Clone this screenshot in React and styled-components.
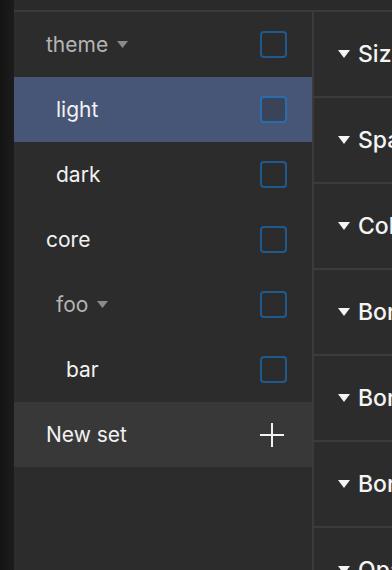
import React from "react";
import styled, { createGlobalStyle } from "styled-components";

const Global = createGlobalStyle`
  html, body { margin: 0; padding: 0; background: #2c2c2c; }
  body { font-family: Inter, "Noto Sans", "Liberation Sans", sans-serif; overflow: hidden; }
  * { box-sizing: border-box; }
`;

const Frame = styled.div`
  display: flex;
  width: 392px;
  height: 570px;
  overflow: hidden;
`;

const Gutter = styled.div`
  width: 14px;
  flex: none;
  background: linear-gradient(to right, #141414, #1c1c1c);
`;

const Main = styled.div`
  flex: 1;
  display: flex;
  flex-direction: column;
  min-width: 0;
`;

const TopStrip = styled.div`
  height: 12px;
  flex: none;
  background: #2a2a2a;
  border-bottom: 2px solid #3b3b3b;
`;

const Body = styled.div`
  flex: 1;
  display: flex;
  min-height: 0;
`;

const SetList = styled.div`
  width: 298px;
  flex: none;
  background: #2c2c2c;
  display: flex;
  flex-direction: column;
`;

const Row = styled.div`
  height: 65px;
  flex: none;
  display: flex;
  align-items: center;
  justify-content: space-between;
  padding-left: ${(p) => 32 + p.$depth * 10}px;
  padding-right: 25px;
  background: ${(p) => (p.$active ? "#475677" : p.$add ? "#383838" : "transparent")};
`;

const Label = styled.span`
  display: flex;
  align-items: center;
  gap: 9px;
  font-size: 21px;
  color: ${(p) => (p.$group ? "#b4b4b4" : "#f2f2f2")};
`;

const Caret = styled.svg`
  display: block;
  flex: none;
`;

const Check = styled.span`
  width: 27px;
  height: 27px;
  flex: none;
  border: 2px solid ${(p) => (p.$active ? "#2a6cae" : "#1f5a8e")};
  border-radius: 4px;
  background: ${(p) => (p.$active ? "#3a4358" : "transparent")};
`;

const PlusIcon = styled.svg`
  display: block;
  flex: none;
  margin-right: 3px;
`;

const Divider = styled.div`
  width: 2px;
  flex: none;
  background: #3b3b3b;
`;

const Props = styled.div`
  flex: 1;
  display: flex;
  flex-direction: column;
  background: #2c2c2c;
  min-width: 0;
  overflow: hidden;
`;

const Section = styled.div`
  height: 86px;
  flex: none;
  display: flex;
  align-items: center;
  gap: 8px;
  padding-left: 24px;
  border-bottom: 2px solid #3b3b3b;
  white-space: nowrap;
  font-size: 23px;
  font-weight: 500;
  color: #f4f4f4;
`;

const sets = [
  { name: "theme", depth: 0, group: true },
  { name: "light", depth: 1, active: true },
  { name: "dark", depth: 1 },
  { name: "core", depth: 0 },
  { name: "foo", depth: 1, group: true },
  { name: "bar", depth: 2 },
];

const sections = ["Sizing", "Spacing", "Color", "Border Radius", "Border Width", "Border", "Opacity"];

export default function App() {
  return (
    <>
      <Global />
      <Frame>
        <Gutter />
        <Main>
          <TopStrip />
          <Body>
            <SetList>
              {sets.map((s) => (
                <Row key={s.name} $depth={s.depth} $active={s.active}>
                  <Label $group={s.group}>
                    {s.name}
                    {s.group && (
                      <Caret width="11" height="7" viewBox="0 0 11 7">
                        <path d="M0 0H11L5.5 7Z" fill="#8a8a8a" />
                      </Caret>
                    )}
                  </Label>
                  <Check $active={s.active} />
                </Row>
              ))}
              <Row $depth={0} $add>
                <Label>New set</Label>
                <PlusIcon width="24" height="24" viewBox="0 0 24 24">
                  <path d="M12 0V24M0 12H24" stroke="#f2f2f2" strokeWidth="2" />
                </PlusIcon>
              </Row>
            </SetList>
            <Divider />
            <Props>
              {sections.map((t) => (
                <Section key={t}>
                  <Caret width="12" height="8" viewBox="0 0 12 8">
                    <path d="M0 0H12L6 8Z" fill="#f4f4f4" />
                  </Caret>
                  {t}
                </Section>
              ))}
            </Props>
          </Body>
        </Main>
      </Frame>
    </>
  );
}
